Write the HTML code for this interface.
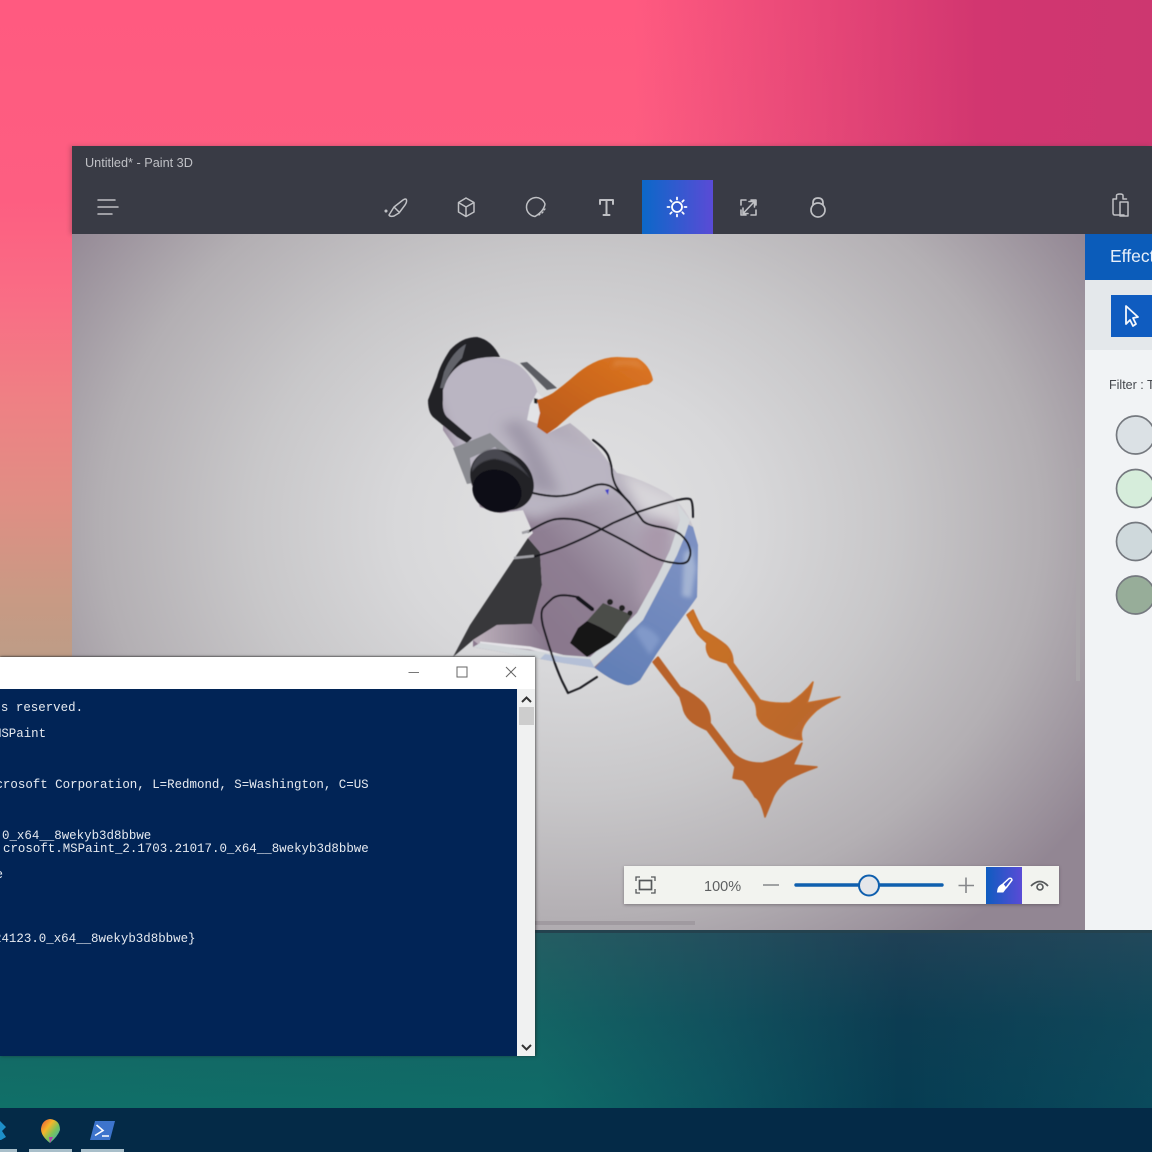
<!DOCTYPE html>
<html><head><meta charset="utf-8"><style>
html,body{margin:0;padding:0;width:1152px;height:1152px;overflow:hidden}
body{position:relative;background:#155a64;font-family:"Liberation Sans",sans-serif}
div{position:absolute}
.m{font:12.45px/14px "Liberation Mono",monospace;color:#e6eaf0;white-space:pre;position:absolute;filter:blur(.25px)}
svg{position:absolute;left:0;top:0}
</style></head><body>
<div style="left:0;top:0;width:1152px;height:940px;background:linear-gradient(90deg,rgba(255,90,125,0) 0,rgba(255,90,125,0) 55%,rgba(205,50,110,.9) 85%,rgba(205,55,112,1) 100%),linear-gradient(180deg,#ff5a80 0,#fd5e81 200px,#f96d85 300px,#ef8084 400px,#e08e84 500px,#c89a84 600px,#bd9c86 660px)"></div>
<div style="left:0;top:930px;width:1152px;height:178px;background:linear-gradient(180deg,rgba(70,70,90,.4) 0,rgba(40,60,80,.18) 90px,rgba(0,0,0,0) 178px),linear-gradient(90deg,#107068 0,#0f6c68 540px,#0c5560 720px,#063c52 900px,#0a4a5c 1152px)"></div>
<div style="left:535px;top:930px;width:617px;height:3px;background:#24424e"></div>
<div style="left:0;top:1108px;width:1152px;height:44px;background:#042a47"></div>
<div style="left:0;top:1149px;width:17px;height:3px;background:#a9bfca"></div>
<div style="left:29px;top:1149px;width:43px;height:3px;background:#a9bfca"></div>
<div style="left:81px;top:1149px;width:43px;height:3px;background:#a9bfca"></div>

<!-- Paint window -->
<div style="left:72px;top:146px;width:1080px;height:88px;background:#393b45;box-shadow:-2px 0 4px rgba(90,50,60,.3)"></div>
<div style="left:85px;top:155px;font-size:12.7px;line-height:16px;color:#bfc0c5;white-space:nowrap">Untitled* - Paint 3D</div>
<div style="left:642px;top:180px;width:71px;height:54px;background:linear-gradient(90deg,#0b68c8,#5a4bd6)"></div>
<div style="left:72px;top:234px;width:1013px;height:696px;background:radial-gradient(ellipse 620px 520px at 500px 290px,#e2e2e3 0,#d8d8da 28%,#c8c7c9 52%,#b3afb3 76%,#928693 100%)"></div>
<div style="left:1085px;top:234px;width:67px;height:696px;background:#f1f3f5"></div>
<div style="left:1085px;top:234px;width:67px;height:46px;background:#0b5cba"></div>
<div style="left:1085px;top:280px;width:67px;height:70px;background:#e4e8eb"></div>
<div style="left:1111px;top:295px;width:41px;height:42px;background:#0f5cc0"></div>
<div style="left:1110px;top:246px;font-size:17.5px;line-height:21px;color:#e8f0fa;white-space:nowrap;width:42px;overflow:hidden">Effects</div>
<div style="left:1109px;top:377px;font-size:12.5px;line-height:16px;color:#44474d;white-space:nowrap;width:43px;overflow:hidden">Filter : T</div>
<div style="left:1076px;top:468px;width:4px;height:213px;background:#aaa6aa"></div>
<div style="left:535px;top:921px;width:160px;height:4px;background:#a09aa0"></div>

<!-- Zoom bar -->
<div style="left:624px;top:866px;width:435px;height:38px;background:#f2f3ef;box-shadow:0 1px 3px rgba(60,50,60,.45)"></div>
<div style="left:986px;top:867px;width:36px;height:37px;background:linear-gradient(90deg,#0f5cc0,#5a4bd6)"></div>
<div style="left:704px;top:878px;font-size:14.5px;line-height:18px;color:#5d5f60">100%</div>

<svg width="1152" height="1152" viewBox="0 0 1152 1152" fill="none">
<!-- toolbar icons -->
<g stroke="#bfc0c4" stroke-width="1.500" stroke-linecap="round" stroke-linejoin="round">
<path d="M98 200H115M98 207H118M98 214H112"/>
<path d="M394 207L403 200Q406 198 406.500 200Q407 202 405 205L399 213L394 216Q390 217 389 215ZM394 207L399 212"/><circle cx="386" cy="211" r=".8"/>
<path d="M466 198L474 202.500V212L466 216.500L458.500 212V202.500ZM458.500 202.500L466 207L474 202.500M466 207V216.500"/>
<path d="M545 204A9.500 9.500 0 1 0 535 216.500M545 204Q544 211 535 216.500"/><path d="M539 215L540 214M542 213L543 212M544 210L545 209" stroke-width="1.300"/>
<path d="M600 200H613V204M600 200V204M606.500 200V215M603.500 215H609.500" stroke-width="2"/>
<path d="M741 205V200H746M751 200H756V205M741 210V215H746M751 215H756V210M743.500 213L754 202M749 201.500H754.500V207M743 208V213.500H748" stroke-width="1.600"/>
<circle cx="818" cy="210" r="7" stroke-width="1.700"/><path d="M813 205V203Q813 198 818 198Q823 198 823 203V205" stroke-width="1.700"/>
<path d="M1124 215H1115Q1113 215 1113 213V199H1116.500V195.500Q1116.500 194 1120 194Q1123 194 1123 195.500V199H1126.500M1120 202H1128V216H1120Z"/>
</g>
<g stroke="#fff" stroke-width="1.800" stroke-linecap="round"><circle cx="677" cy="207" r="5"/><path d="M677 197.500V199.500M677 214.500V216.500M667.500 207H669.500M684.500 207H686.500M670.300 200.300L671.700 201.700M682.300 212.300L683.700 213.700M683.700 200.300L682.300 201.700M671.700 212.300L670.300 213.700"/></g>
<path d="M1126 306L1138 317L1133 318L1136 324L1133 326L1130 320L1126 324Z" fill="#0f5cc0" stroke="#f4f7fc" stroke-width="1.800" stroke-linejoin="round"/>
<!-- filter circles -->
<g stroke="#75797f" stroke-width="1.700"><circle cx="1135.500" cy="435" r="19" fill="#dbe1e5"/><circle cx="1135.500" cy="488.500" r="19" fill="#d6eddb"/><circle cx="1135.500" cy="541.500" r="19" fill="#cfd9dc"/><circle cx="1135.500" cy="595" r="19" fill="#97ad99"/></g>

<!-- zoom bar icons -->
<g stroke="#55585a" stroke-width="1.300" fill="none"><rect x="639.500" y="880.500" width="12" height="9" stroke-width="1.700"/><path d="M636 881V877H640M651 877H655V881M636 889V893H640M651 893H655V889"/></g>
<path d="M763 885H779M958.500 885.500H974M966 877.500V893" stroke="#85878a" stroke-width="1.600"/>
<path d="M796 885H942" stroke="#0f5fae" stroke-width="3.400" stroke-linecap="round"/>
<circle cx="869" cy="885.500" r="10" fill="#e4e6ea" stroke="#0f5fae" stroke-width="2"/>
<path d="M1003 884L1009 878.500Q1011.500 877.500 1012 880L1006 888" stroke="#fff" stroke-width="1.500" stroke-linejoin="round"/>
<path d="M1003 884L1006 888L1003 892H997.500L998 889Q999 886 1003 884Z" fill="#fff" stroke="#fff" stroke-width="1"/>
<path d="M1031 886Q1040 877 1048 886" stroke="#55585a" stroke-width="1.700"/><circle cx="1040" cy="887" r="3" stroke="#55585a" stroke-width="1.600"/>

<!-- DUCK -->
<defs>
<filter id="soft" x="-5%" y="-5%" width="110%" height="110%"><feGaussianBlur stdDeviation=".5"/></filter>
<filter id="sh" x="-40%" y="-40%" width="180%" height="180%"><feGaussianBlur stdDeviation="6"/></filter>
<filter id="sh2" x="-30%" y="-30%" width="160%" height="160%"><feGaussianBlur stdDeviation="2"/></filter>
<clipPath id="bc"><path d="M443 390Q448 372 463 363Q480 355 500 358Q520 362 530 377Q536 385 538 395L547 434Q558 428 570 423Q582 432 590 440Q600 450 607 460L617 473Q640 478 667 493Q685 505 693 527L698 545L697 597Q690 607 673 630L657 653L640 680Q632 686 627 685Q615 683 595 668L563 663L473 647L473 640L497 625L532 624L542 585L540 552L528 538L533 533L523 510L500 513L480 507L470 480L455 448L443 430Z"/></clipPath>
<linearGradient id="b" gradientUnits="userSpaceOnUse" x1="690" y1="490" x2="545" y2="620"><stop offset="0" stop-color="#d2d0d5"/><stop offset=".3" stop-color="#b0a9b7"/><stop offset=".7" stop-color="#8f7f93"/><stop offset="1" stop-color="#8a788d"/></linearGradient>
<linearGradient id="w" gradientUnits="userSpaceOnUse" x1="480" y1="640" x2="550" y2="640"><stop offset="0" stop-color="#b9adb8"/><stop offset="1" stop-color="#85758a"/></linearGradient>
<linearGradient id="o" x1="0" y1="1" x2="1" y2="0"><stop offset="0" stop-color="#b8591a"/><stop offset=".6" stop-color="#cf6a1c"/><stop offset="1" stop-color="#dd7625"/></linearGradient>
<linearGradient id="f" gradientUnits="userSpaceOnUse" x1="690" y1="620" x2="820" y2="740"><stop offset="0" stop-color="#cb7326"/><stop offset="1" stop-color="#b8652e"/></linearGradient>
<linearGradient id="bl" gradientUnits="userSpaceOnUse" x1="680" y1="560" x2="610" y2="680"><stop offset="0" stop-color="#7b90c2"/><stop offset="1" stop-color="#627fb6"/></linearGradient>
</defs>
<g filter="url(#soft)">
<!-- legs -->
<path d="M687 615L693 610Q698 622 703 630Q715 637 723 643Q733 650 733 663L760 700Q770 704 790 703Q803 695 813 682Q811 692 807 703L840 697Q825 704 817 710Q806 720 803 727Q800 733 802 740Q785 738 773 730Q760 725 757 715Q757 708 755 703L727 663Q715 660 710 657Q705 650 707 643Q700 637 697 633Z" fill="url(#f)" stroke="#c46c2a" stroke-width="1.500" stroke-linejoin="round"/>
<path d="M653 662L658 657L680 687Q695 695 703 703Q711 712 710 723L733 753Q745 764 763 763Q785 758 802 743Q798 755 793 765L817 767Q800 773 787 780Q775 790 772 800L765 817Q761 800 755 797Q748 785 743 780L733 778L735 767L707 730Q695 725 690 720Q684 714 683 707L680 697Z" fill="#b8622a" stroke="#b8622a" stroke-width="1.500" stroke-linejoin="round"/>
<!-- wing dark -->
<path d="M528 538L540 552L542 585L532 624L497 625L473 640L453 657L470 625L500 580Z" fill="#38383b"/>
<!-- body -->
<path d="M443 390Q448 372 463 363Q480 355 500 358Q520 362 530 377Q536 385 538 395L547 434Q558 428 570 423Q582 432 590 440Q600 450 607 460L617 473Q640 478 667 493Q685 505 693 527L698 545L697 597Q690 607 673 630L657 653L640 680Q632 686 627 685Q615 683 595 668L563 663L473 647L473 640L497 625L532 624L542 585L540 552L528 538L533 533L523 510L500 513L480 507L470 480L455 448L443 430Z" fill="url(#b)"/>
<g clip-path="url(#bc)">
<path d="M430 380L470 345L540 365L545 430L610 455L620 490L560 510L535 520L470 500Z" fill="#bab5c2" filter="url(#sh)"/>
<path d="M520 420Q545 450 560 495L530 490Q525 450 500 425Z" fill="#9f98a9" filter="url(#sh)"/>
<path d="M640 530L675 510L665 580L640 610Z" fill="#a999ab" filter="url(#sh)"/>
<path d="M620 470L680 500L690 530L640 510Z" fill="#d8d6da" filter="url(#sh)"/>
</g>
<!-- lower wing lavender -->
<path d="M473 640L497 625L532 624L556 656L520 650L478 644Z" fill="url(#w)"/>
<path d="M480 643L530 648L565 657" stroke="#e4e3e7" stroke-width="3"/>
<!-- blue -->
<path d="M680 520L693 527L698 545L697 597Q690 607 673 630L657 653L640 680Q632 686 627 685Q615 683 595 668L620 643L643 620L663 582L677 555Z" fill="url(#bl)"/>
<path d="M684 553L692 548L696 568L691 598L682 596Z" fill="#a3b3d3" filter="url(#sh2)"/>
<path d="M640 625Q655 630 660 640L650 655Q640 640 635 632Z" fill="#8199c9" filter="url(#sh2)"/>
<!-- white rim -->
<path d="M677 503L690 520L684 538L677 555L663 582L643 620L620 643L593 668L563 663L473 647L480 643L563 655L590 657L617 633L637 613L657 577L670 550L680 520Z" fill="#d3d7da"/>
<path d="M595 668L563 663L540 659L545 654L563 657L590 659Z" fill="#b4bfd6"/>
<!-- device -->
<path d="M603 603L632 615L617 637L600 627L587 621Z" fill="#4c4e49"/>
<path d="M587 621L600 627L617 637L610 643L587 657L570 643L578 628Z" fill="#131315"/>
<circle cx="610" cy="602" r="3" fill="#222"/><circle cx="622" cy="608" r="3" fill="#222"/><circle cx="630" cy="613" r="2.500" fill="#222"/>
<!-- cables -->
<g stroke="#17171b" stroke-width="2" stroke-linejoin="round" stroke-linecap="round" fill="none">
<path d="M593 610L577 597Q560 593 553 598Q547 603 543 608Q540 613 543 626Q547 640 552 655Q557 670 562 681L568 693L580 688L597 677"/>
<path d="M578 598L592 609" stroke-width="4"/>
<path d="M533 493Q550 497 561 496Q573 495 581 491Q590 487 596 485Q603 483 610 486Q617 490 623 496Q630 503 635 510Q640 517 643 521Q647 525 660 527Q673 529 680 534Q687 540 689 546Q692 553 689 559Q687 565 675 563Q663 562 651 556Q640 550 628 543Q617 537 603 530Q590 523 578 520Q567 518 557 519Q547 520 528 532"/>
<path d="M533 557Q557 550 568 545Q580 540 590 535Q600 530 613 523Q627 517 638 512Q650 508 663 504Q677 500 683 499Q690 498 691 500Q693 503 693 517"/>
<path d="M593 440Q607 450 609 458Q612 467 612 473Q613 480 616 486Q620 493 630 503"/>
</g>
<path d="M514 558L534 556M522 533L529 531" stroke="#a0a0a6" stroke-width="2.500"/>
<path d="M605 490L609 489L608 495Z" fill="#4040c8"/>
<!-- white patch + beak -->
<path d="M537 392L545 400L541 425L527 420L530 405Z" fill="#e2e3e6"/>
<path d="M534 398L538 399L537 404L534 403Z" fill="#222"/>
<path d="M537 400Q550 396 557 390Q565 384 573 377Q583 368 593 363Q605 357 617 357L637 358Q650 365 653 380Q650 385 643 385Q630 389 617 392L597 398Q585 404 573 413Q565 420 557 427L547 434L537 427Q538 420 540 413Z" fill="url(#o)"/>
<path d="M615 360L637 360L646 370Q625 362 612 368Z" fill="#de8a45" opacity=".6" filter="url(#sh2)"/>
<!-- headphones -->
<path d="M520 363L527 362L557 388L547 390Z" fill="#5c5d63"/>
<path d="M500 357Q492 340 477 337Q462 337 450 350Q440 365 437 377L428 400Q428 412 433 417L457 437L467 443L472 438L447 417Q442 412 443 400L443 390Q448 372 463 363Q480 356 500 357Z" fill="#242428"/>
<path d="M466 344Q452 352 444 372L440 388L444 388Q448 372 462 358Z" fill="#62636b"/>
<path d="M453 448L490 433L528 467L522 472L495 447L470 458L472 483L467 484Z" fill="#8a8b91"/>
<ellipse cx="502" cy="480" rx="34" ry="28" transform="rotate(38 502 480)" fill="#242428"/>
<path d="M472 466Q480 448 497 449Q515 456 530 478Q515 462 495 459Q480 460 472 472Z" fill="#4a4a51" filter="url(#soft)"/>
<ellipse cx="497" cy="491" rx="25" ry="21" transform="rotate(20 497 491)" fill="#101013"/>
</g>
</svg>

<!-- Console -->
<div style="left:0;top:657px;width:535px;height:399px;background:#fff;box-shadow:1px 0 3px rgba(30,30,30,.55),0 -1px 1px rgba(60,60,60,.5)"></div>
<div style="left:0;top:689px;width:517px;height:367px;background:#012456"></div>
<div style="left:517px;top:689px;width:18px;height:367px;background:#f0f1f1"></div>
<div style="left:519px;top:707px;width:15px;height:18px;background:#cdcdcd"></div>
<span class="m" style="left:-14px;top:701px">hts reserved.</span>
<span class="m" style="left:-36px;top:727px">    MSPaint</span>
<span class="m" style="left:-12px;top:778px">icrosoft Corporation, L=Redmond, S=Washington, C=US</span>
<span class="m" style="left:2px;top:829px">0_x64__8wekyb3d8bbwe</span>
<span class="m" style="left:3px;top:842px">crosoft.MSPaint_2.1703.21017.0_x64__8wekyb3d8bbwe</span>
<span class="m" style="left:-12px;top:868px">re</span>
<span class="m" style="left:-6px;top:932px">24123.0_x64__8wekyb3d8bbwe}</span>

<svg width="1152" height="1152" viewBox="0 0 1152 1152" fill="none">
<path d="M408.500 672.500H419" stroke="#777" stroke-width="1"/>
<rect x="457" y="667" width="10" height="10" stroke="#666" stroke-width="1"/>
<path d="M506 667L516 677M516 667L506 677" stroke="#666" stroke-width="1"/>
<path d="M522 702L526.500 697.500L531 702" stroke="#333" stroke-width="2"/>
<path d="M522 1045L526.500 1049.500L531 1045" stroke="#333" stroke-width="2"/>
<!-- taskbar icons -->
<path d="M0 1121L6 1127L2 1131L6 1137L1 1140H0Z" fill="#1d8fc9"/>
<defs><linearGradient id="ball" x1="0" y1="0" x2="1" y2="1"><stop offset="0" stop-color="#e8503c"/><stop offset=".35" stop-color="#f5b62a"/><stop offset=".6" stop-color="#7cc35a"/><stop offset="1" stop-color="#2fa6d0"/></linearGradient></defs>
<path d="M50 1119Q60 1120 60 1130Q58 1136 50 1143Q41 1136 41 1129Q42 1120 50 1119Z" fill="url(#ball)"/>
<path d="M49 1137L53 1137L50 1143Z" fill="#b03fa8"/>
<path d="M95 1121H115L110 1140H90Z" fill="#3d74cc"/>
<path d="M96.500 1125L103 1130.500L95 1135.500M102 1136H109" stroke="#fff" stroke-width="1.600"/>
</svg>
</body></html>
